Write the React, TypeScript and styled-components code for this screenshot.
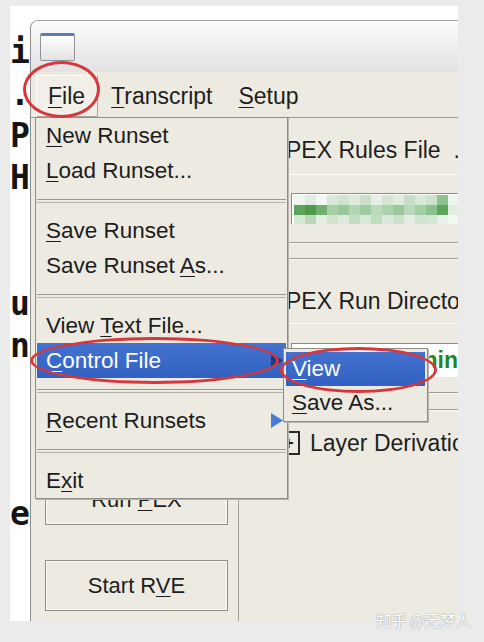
import React from "react";
import styled, { createGlobalStyle } from "styled-components";

const GlobalStyle = createGlobalStyle`
  html, body { margin: 0; padding: 0; }
  body {
    background: #ebebeb;
    font-family: "Liberation Sans", Arial, sans-serif;
    color: #1e1e1e;
  }
  * { box-sizing: border-box; }
  u { text-decoration-thickness: 1px; text-underline-offset: 3px; }
`;

const Page = styled.div`
  position: relative;
  width: 484px;
  height: 642px;
  overflow: hidden;
  padding: 6px 0 0 10px;
`;

const Screen = styled.div`
  display: flex;
  width: 448px;
  height: 615px;
  background: #ffffff;
  overflow: hidden;
`;

const Terminal = styled.div`
  flex: none;
  width: 20px;
  overflow: hidden;
  padding-top: 25px;
  font-family: "DejaVu Sans Mono", monospace;
  font-weight: bold;
  font-size: 33px;
  line-height: 42px;
  color: #151515;
  white-space: pre;
`;

const TermLine = styled.div`
  height: 42px;
`;

const Window = styled.div`
  position: relative;
  flex: 1;
  min-width: 0;
  margin-top: 14px;
  display: flex;
  flex-direction: column;
  border-left: 1px solid #8d8d8d;
  border-top: 1px solid #a3a3a3;
  border-top-left-radius: 8px;
  background: #edebe1;
`;

const TitleBar = styled.div`
  flex: none;
  height: 51px;
  display: flex;
  align-items: center;
  padding-left: 9px;
  border-top-left-radius: 7px;
  background: linear-gradient(#fdfdfd, #ececec 60%, #e3e3e3);
`;

const WindowIcon = styled.div`
  width: 35px;
  height: 28px;
  border: 1px solid #8f949c;
  border-top: 3px solid #5a7db3;
  border-radius: 2px;
  background: linear-gradient(#ffffff, #e2e2e2);
`;

const MenuBar = styled.div`
  flex: none;
  height: 46px;
  display: flex;
  align-items: stretch;
  padding: 3px 0 0 5px;
  border-bottom: 1px solid #9c9a92;
  font-size: 23px;
`;

const MenuBarItem = styled.div<{ $active?: boolean }>`
  display: flex;
  align-items: center;
  padding: 0 12px;
  border: 1px solid transparent;
  ${(p) =>
    p.$active &&
    `
    border-color: #ffffff #a8a69e #a8a69e #ffffff;
    background: #f1efe7;
    padding: 0 12px 0 11px;
  `}
`;

const Body = styled.div`
  flex: 1;
  min-height: 0;
  display: flex;
`;

const LeftPanel = styled.div`
  flex: none;
  width: 208px;
  border-right: 1px solid #a19f97;
  padding: 356px 0 0 14px;
  display: flex;
  flex-direction: column;
  gap: 35px;
`;

const PanelButton = styled.div`
  width: 183px;
  height: 51px;
  display: flex;
  align-items: center;
  justify-content: center;
  font-size: 22px;
  border: 1px solid #8f8d86;
  box-shadow: inset 1px 1px 0 #fbfaf6, inset -1px -1px 0 #fbfaf6;
`;

const RightPanel = styled.div`
  flex: 1;
  min-width: 0;
  display: flex;
  flex-direction: column;
  font-size: 23px;
`;

const PanelLabel = styled.div<{ $h: number; $pt: number }>`
  height: ${(p) => p.$h}px;
  padding: ${(p) => p.$pt}px 0 0 47px;
  border-bottom: 1px solid #fbfaf3;
  white-space: pre;
  line-height: 23px;
`;

const Field = styled.div<{ $h: number; $mt: number }>`
  height: ${(p) => p.$h}px;
  margin: ${(p) => p.$mt}px 0 0 52px;
  background: #ffffff;
  border-left: 1px solid #8a8a8a;
  border-top: 1px solid #8a8a8a;
  overflow: hidden;
`;

const Mosaic = styled.div`
  display: grid;
  grid-template-columns: repeat(15, 11px);
  grid-auto-rows: 10px;
  margin: 1px 0 0 2px;
  filter: blur(0.7px);
`;

const Cell = styled.div<{ $c: string }>`
  background: ${(p) => p.$c};
`;

const PathText = styled.div`
  height: 100%;
  display: flex;
  align-items: center;
  justify-content: flex-end;
  font-weight: bold;
  font-size: 23px;
  color: #1d8a1d;
  white-space: nowrap;
`;

const Rule = styled.div<{ $mt: number }>`
  height: 2px;
  margin-top: ${(p) => p.$mt}px;
  border-top: 1px solid #9d9b93;
  border-bottom: 1px solid #fbfaf3;
`;

const TreeRow = styled.div`
  display: flex;
  align-items: center;
  gap: 10px;
  height: 24px;
  margin-top: 20px;
  padding-left: 38px;
  white-space: nowrap;
`;

const ExpandBox = styled.div`
  flex: none;
  width: 23px;
  height: 24px;
  border: 2px solid #2a2a2a;
  display: flex;
  align-items: center;
  justify-content: center;
  font-size: 18px;
  line-height: 1;
  font-weight: bold;
`;

const Popup = styled.div<{ $x: number; $y: number; $w: number }>`
  position: absolute;
  left: ${(p) => p.$x}px;
  top: ${(p) => p.$y}px;
  width: ${(p) => p.$w}px;
  background: #edebe1;
  border: 1px solid #8e8c86;
  box-shadow: 1px 1px 0 #b9b7b0;
  font-size: 22.5px;
  z-index: 2;
`;

const SubPopup = styled(Popup)`
  padding: 3px 2px 1px;
  z-index: 3;
`;

const MenuItem = styled.div<{ $hl?: boolean; $pl: number }>`
  height: ${(p) => (p.$pl > 8 ? 35 : 34)}px;
  margin: ${(p) => (p.$pl > 8 ? "0 1px" : "0")};
  display: flex;
  align-items: center;
  justify-content: space-between;
  padding: 0 2px 0 ${(p) => p.$pl}px;
  white-space: nowrap;
  color: ${(p) => (p.$hl ? "#ffffff" : "#1c1c1c")};
  background: ${(p) => (p.$hl ? "linear-gradient(#4372d0, #3361c2)" : "transparent")};
`;

const Separator = styled.div`
  height: 25px;
  display: flex;
  align-items: center;
  padding: 0 1px;
  &::after {
    content: "";
    flex: 1;
    height: 2px;
    border-top: 1px solid #9a988f;
    border-bottom: 1px solid #b3b1a9;
  }
`;

const Ring = styled.div<{ $x: number; $y: number; $w: number; $h: number }>`
  position: absolute;
  left: ${(p) => p.$x}px;
  top: ${(p) => p.$y}px;
  width: ${(p) => p.$w}px;
  height: ${(p) => p.$h}px;
  border: 3px solid #d8363a;
  border-radius: 50%;
  z-index: 5;
  pointer-events: none;
`;

const Watermark = styled.div`
  position: absolute;
  right: 13px;
  bottom: 10px;
  font-family: "Noto Sans CJK SC", "Liberation Sans", sans-serif;
  font-size: 16px;
  color: #ffffff;
  text-shadow: 0 0 1px #9a9a9a, 0 0 1px #9a9a9a;
  letter-spacing: -0.5px;
`;

const Arrow = ({ color }: { color: string }) => (
  <svg width="14" height="17" viewBox="0 0 14 17">
    <polygon points="1,1 13,8.5 1,16" fill={color} />
  </svg>
);

const mosaicRows = [
  ["#eef4ee", "#e2ece2", "#f4f8f4", "#d8e8d8", "#cfe3cf", "#dbeadb", "#c9dfc9", "#e6efe6", "#d2e5d2", "#dfece0", "#c6dec6", "#d8e9d8", "#cde2cd", "#8fc28f", "#eef4ee"],
  ["#5ca45c", "#4e9b4e", "#6fb06f", "#a9cfa9", "#9ac79a", "#b4d5b4", "#a0caa0", "#bcd9bc", "#aed2ae", "#9cc69c", "#b8d8b8", "#a6cea6", "#8cc08c", "#5aa65a", "#e3eee3"],
  ["#d5e7d5", "#b9d8b9", "#e4efe4", "#cfe3cf", "#dcebdc", "#c3ddc3", "#d6e8d6", "#bfdcbf", "#d9e9d9", "#cbe1cb", "#e1eee1", "#cfe4cf", "#d3e6d3", "#e7f1e7", "#f2f7f2"],
];

const termLines = ["i", ".", "P", "H", "", "", "u", "n", "", "", "", "e"];

export default function App() {
  return (
    <>
      <GlobalStyle />
      <Page>
        <Screen>
          <Terminal>
            {termLines.map((t, i) => (
              <TermLine key={i}>{t}</TermLine>
            ))}
          </Terminal>
          <Window>
            <TitleBar>
              <WindowIcon />
            </TitleBar>
            <MenuBar>
              <MenuBarItem $active>
                <span><u>F</u>ile</span>
              </MenuBarItem>
              <MenuBarItem>
                <span><u>T</u>ranscript</span>
              </MenuBarItem>
              <MenuBarItem>
                <span><u>S</u>etup</span>
              </MenuBarItem>
            </MenuBar>
            <Body>
              <LeftPanel>
                <PanelButton>
                  <span>Run <u>P</u>EX</span>
                </PanelButton>
                <PanelButton>
                  <span>Start R<u>V</u>E</span>
                </PanelButton>
              </LeftPanel>
              <RightPanel>
                <PanelLabel $h={57} $pt={21}>{"PEX Rules File  ..."}</PanelLabel>
                <Field $h={31} $mt={18}>
                  <Mosaic>
                    {mosaicRows.flatMap((row, r) =>
                      row.map((c, i) => <Cell key={`${r}-${i}`} $c={c} />)
                    )}
                  </Mosaic>
                </Field>
                <Rule $mt={18} />
                <Rule $mt={14} />
                <PanelLabel $h={64} $pt={30}>{"PEX Run Directory"}</PanelLabel>
                <Field $h={34} $mt={19}>
                  <PathText>/home/pex/run_within</PathText>
                </Field>
                <Rule $mt={15} />
                <Rule $mt={15} />
                <TreeRow>
                  <ExpandBox>+</ExpandBox>
                  <span>Layer Derivations</span>
                </TreeRow>
              </RightPanel>
            </Body>

            <Popup $x={4} $y={96} $w={253}>
              <MenuItem $pl={9}><span><u>N</u>ew Runset</span></MenuItem>
              <MenuItem $pl={9}><span><u>L</u>oad Runset...</span></MenuItem>
              <Separator />
              <MenuItem $pl={9}><span><u>S</u>ave Runset</span></MenuItem>
              <MenuItem $pl={9}><span>Save Runset <u>A</u>s...</span></MenuItem>
              <Separator />
              <MenuItem $pl={9}><span>View <u>T</u>ext File...</span></MenuItem>
              <MenuItem $pl={9} $hl>
                <span><u>C</u>ontrol File</span>
                <Arrow color="#1d3a80" />
              </MenuItem>
              <Separator />
              <MenuItem $pl={9}>
                <span><u>R</u>ecent Runsets</span>
                <Arrow color="#4a7bd6" />
              </MenuItem>
              <Separator />
              <MenuItem $pl={9}><span>E<u>x</u>it</span></MenuItem>
            </Popup>

            <SubPopup $x={252} $y={327} $w={145}>
              <MenuItem $pl={6} $hl><span><u>V</u>iew</span></MenuItem>
              <MenuItem $pl={6}><span><u>S</u>ave As...</span></MenuItem>
            </SubPopup>

            <Ring $x={-8} $y={40} $w={77} $h={57} />
            <Ring $x={-1} $y={316} $w={249} $h={47} />
            <Ring $x={249} $y={326} $w={157} $h={46} />
          </Window>
        </Screen>
        <Watermark>知乎 @无梦人</Watermark>
      </Page>
    </>
  );
}
